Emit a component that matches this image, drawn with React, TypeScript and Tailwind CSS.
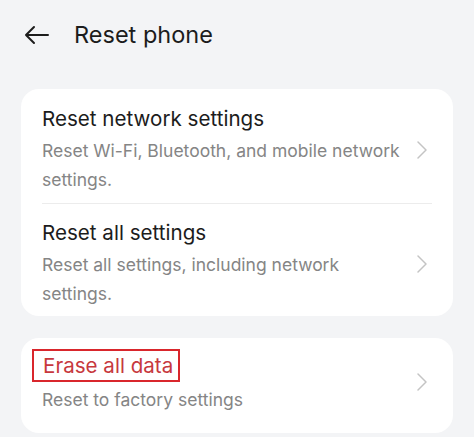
import React from "react";

const Chevron = () => (
  <svg width="12" height="20" viewBox="0 0 12 20" fill="none" className="shrink-0 mr-[4px]">
    <path d="M2 2l8 8-8 8" stroke="#c4c4c4" strokeWidth="1.5" strokeLinecap="round" strokeLinejoin="round" />
  </svg>
);

type RowProps = {
  title: React.ReactNode;
  desc: React.ReactNode;
  className?: string;
};

const Row = ({ title, desc, className = "" }: RowProps) => (
  <div className={`flex items-center justify-between gap-4 ${className}`}>
    <div className="flex flex-col">
      <div className="text-[20.6px] leading-[28px] text-[#1c1c1c]">{title}</div>
      <div className="text-[17.5px] leading-[29px] text-[#858585] mt-[3px]">{desc}</div>
    </div>
    <Chevron />
  </div>
);

export default function App() {
  return (
    <div
      className="w-[474px] h-[437px] bg-[#f3f4f6] overflow-hidden"
      style={{ fontFamily: "Inter, 'Noto Sans', sans-serif" }}
    >
      <div className="flex items-center h-[70px] pl-[24px]">
        <svg width="26" height="20" viewBox="0 0 26 20" fill="none">
          <path d="M24 10H2M10 2L2 10l8 8" stroke="#1c1c1c" strokeWidth="2" strokeLinecap="round" strokeLinejoin="round" />
        </svg>
        <h1 className="ml-[24px] text-[23.5px] text-[#1c1c1c] font-normal">Reset phone</h1>
      </div>

      <div className="mx-[21px] mt-[19px] bg-white rounded-[18px] px-[21px]">
        <Row
          className="pt-[16px] pb-[9px] border-b border-[#ececec]"
          title="Reset network settings"
          desc={<>Reset Wi-Fi, Bluetooth, and mobile network<br />settings.</>}
        />
        <Row
          className="pt-[15px] pb-[8px]"
          title="Reset all settings"
          desc={<>Reset all settings, including network<br />settings.</>}
        />
      </div>

      <div className="mx-[21px] mt-[22px] bg-white rounded-[18px] px-[21px] pt-[11px] pb-[19px]">
        <Row
          title={
            <span className="inline-block -ml-[10px] pl-[9px] pr-[5px] py-[1px] leading-[27px] border-2 border-[#d9262c] text-[#c7383d]">
              Erase all data
            </span>
          }
          desc="Reset to factory settings"
        />
      </div>
    </div>
  );
}
